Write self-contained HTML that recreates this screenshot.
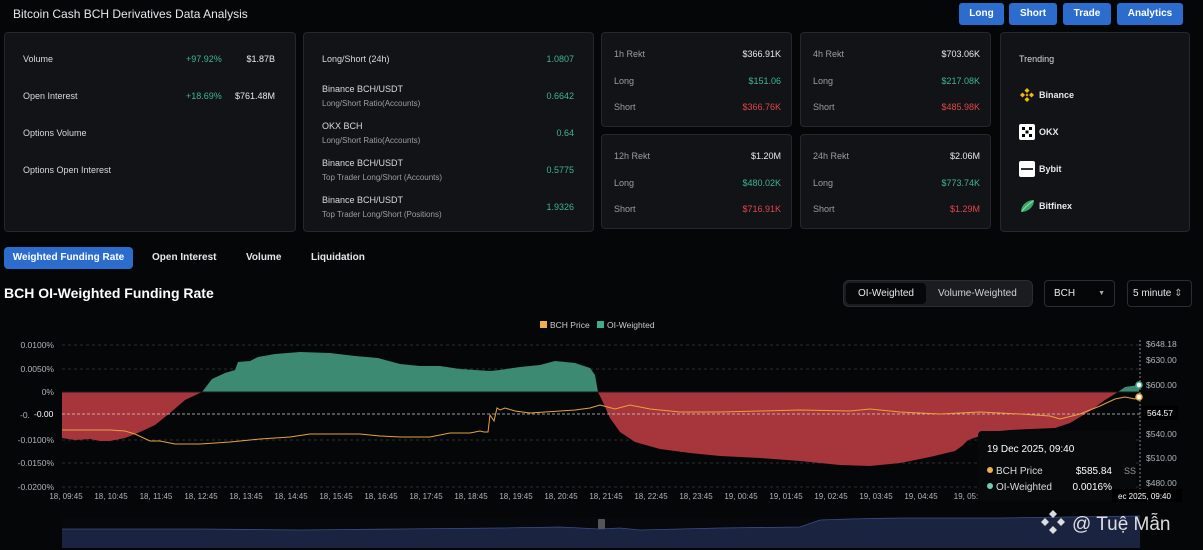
<!DOCTYPE html>
<html><head><meta charset="utf-8"><style>
*{margin:0;padding:0;box-sizing:border-box}
body{width:1203px;height:550px;background:#050608;color:#e6e8eb;font-family:"Liberation Sans",sans-serif;font-size:9px;position:relative;overflow:hidden}
.abs{position:absolute}
.card{position:absolute;background:#111317;border:1px solid #24272d;border-radius:4px}
.g{color:#3fb68b}.r{color:#e0474c}
.btn{position:absolute;top:3px;height:22px;background:#2c6ccd;border-radius:3px;color:#fff;font-weight:bold;font-size:10px;line-height:22px;text-align:center}
.lbl{color:#d8dadd}
.sub{color:#9a9ea5;font-size:8px}
.tab{position:absolute;top:247px;height:22px;line-height:22px;font-weight:bold;font-size:10px;color:#e6e8eb}
</style></head><body>
<div class="abs" style="left:13px;top:7px;font-size:12px;color:#e6e8eb">Bitcoin Cash BCH Derivatives Data Analysis</div>
<div class="btn" style="left:959px;width:45px">Long</div>
<div class="btn" style="left:1009px;width:48px">Short</div>
<div class="btn" style="left:1063px;width:48px">Trade</div>
<div class="btn" style="left:1117px;width:66px">Analytics</div>

<div class="card" style="left:4px;top:32px;width:292px;height:200px">
 <div class="abs lbl" style="left:18px;top:21px">Volume</div><div class="abs g" style="left:181px;top:21px">+97.92%</div><div class="abs" style="right:20px;top:21px">$1.87B</div>
 <div class="abs lbl" style="left:18px;top:58px">Open Interest</div><div class="abs g" style="left:181px;top:58px">+18.69%</div><div class="abs" style="right:20px;top:58px">$761.48M</div>
 <div class="abs lbl" style="left:18px;top:95px">Options Volume</div>
 <div class="abs lbl" style="left:18px;top:132px">Options Open Interest</div>
</div>
<div class="card" style="left:303px;top:32px;width:291px;height:200px">
 <div class="abs lbl" style="left:18px;top:21px">Long/Short (24h)</div><div class="abs g" style="right:19px;top:21px">1.0807</div>
 <div class="abs lbl" style="left:18px;top:51px">Binance BCH/USDT</div><div class="abs sub" style="left:18px;top:66px">Long/Short Ratio(Accounts)</div><div class="abs g" style="right:19px;top:58px">0.6642</div>
 <div class="abs lbl" style="left:18px;top:88px">OKX BCH</div><div class="abs sub" style="left:18px;top:103px">Long/Short Ratio(Accounts)</div><div class="abs g" style="right:19px;top:95px">0.64</div>
 <div class="abs lbl" style="left:18px;top:125px">Binance BCH/USDT</div><div class="abs sub" style="left:18px;top:140px">Top Trader Long/Short (Accounts)</div><div class="abs g" style="right:19px;top:132px">0.5775</div>
 <div class="abs lbl" style="left:18px;top:162px">Binance BCH/USDT</div><div class="abs sub" style="left:18px;top:177px">Top Trader Long/Short (Positions)</div><div class="abs g" style="right:19px;top:169px">1.9326</div>
</div>

<div class="card" style="left:601px;top:32px;width:191px;height:95px">
 <div class="abs sub" style="left:12px;top:16px;font-size:9px">1h Rekt</div><div class="abs" style="right:10px;top:16px">$366.91K</div>
 <div class="abs sub" style="left:12px;top:43px;font-size:9px">Long</div><div class="abs g" style="right:10px;top:43px">$151.06</div>
 <div class="abs sub" style="left:12px;top:69px;font-size:9px">Short</div><div class="abs r" style="right:10px;top:69px">$366.76K</div>
</div>
<div class="card" style="left:800px;top:32px;width:191px;height:95px">
 <div class="abs sub" style="left:12px;top:16px;font-size:9px">4h Rekt</div><div class="abs" style="right:10px;top:16px">$703.06K</div>
 <div class="abs sub" style="left:12px;top:43px;font-size:9px">Long</div><div class="abs g" style="right:10px;top:43px">$217.08K</div>
 <div class="abs sub" style="left:12px;top:69px;font-size:9px">Short</div><div class="abs r" style="right:10px;top:69px">$485.98K</div>
</div>
<div class="card" style="left:601px;top:134px;width:191px;height:95px">
 <div class="abs sub" style="left:12px;top:16px;font-size:9px">12h Rekt</div><div class="abs" style="right:10px;top:16px">$1.20M</div>
 <div class="abs sub" style="left:12px;top:43px;font-size:9px">Long</div><div class="abs g" style="right:10px;top:43px">$480.02K</div>
 <div class="abs sub" style="left:12px;top:69px;font-size:9px">Short</div><div class="abs r" style="right:10px;top:69px">$716.91K</div>
</div>
<div class="card" style="left:800px;top:134px;width:191px;height:95px">
 <div class="abs sub" style="left:12px;top:16px;font-size:9px">24h Rekt</div><div class="abs" style="right:10px;top:16px">$2.06M</div>
 <div class="abs sub" style="left:12px;top:43px;font-size:9px">Long</div><div class="abs g" style="right:10px;top:43px">$773.74K</div>
 <div class="abs sub" style="left:12px;top:69px;font-size:9px">Short</div><div class="abs r" style="right:10px;top:69px">$1.29M</div>
</div>
<div class="card" style="left:1000px;top:32px;width:190px;height:200px">
 <div class="abs lbl" style="left:18px;top:21px">Trending</div>
 <svg class="abs" style="left:18px;top:54px" width="16" height="16" viewBox="0 0 16 16"><g fill="#f0b90b"><path d="M8 1l2.5 2.5L8 6 5.5 3.5z"/><path d="M8 10l2.5 2.5L8 15l-2.5-2.5z"/><path d="M3.5 5.5L6 8l-2.5 2.5L1 8z"/><path d="M12.5 5.5L15 8l-2.5 2.5L10 8z"/><path d="M8 6.5L9.5 8 8 9.5 6.5 8z"/></g></svg>
 <div class="abs" style="left:38px;top:57px;font-weight:bold">Binance</div>
 <svg class="abs" style="left:18px;top:91px" width="16" height="16"><rect width="16" height="16" rx="2" fill="#fff"/><g fill="#000"><rect x="3" y="3" width="3" height="3"/><rect x="10" y="3" width="3" height="3"/><rect x="6.5" y="6.5" width="3" height="3"/><rect x="3" y="10" width="3" height="3"/><rect x="10" y="10" width="3" height="3"/></g></svg>
 <div class="abs" style="left:38px;top:94px;font-weight:bold">OKX</div>
 <svg class="abs" style="left:18px;top:128px" width="16" height="16"><rect width="16" height="16" rx="2" fill="#fff"/><rect x="2" y="7" width="12" height="2" fill="#333"/></svg>
 <div class="abs" style="left:38px;top:131px;font-weight:bold">Bybit</div>
 <svg class="abs" style="left:18px;top:165px" width="16" height="16"><path d="M2 14C2 7 8 2 15 2 15 9 9 14 2 14z" fill="#3aa866"/><path d="M3 13C6 9 10 6 14 3" stroke="#9ee0b0" stroke-width="1" fill="none"/></svg>
 <div class="abs" style="left:38px;top:168px;font-weight:bold">Bitfinex</div>
</div>

<div class="tab" style="left:4px;width:129px;background:#2c6ccd;border-radius:4px;text-align:center;color:#fff">Weighted Funding Rate</div>
<div class="tab" style="left:152px">Open Interest</div>
<div class="tab" style="left:246px">Volume</div>
<div class="tab" style="left:311px">Liquidation</div>

<div class="abs" style="left:4px;top:285px;font-size:14px;font-weight:bold;color:#fff">BCH OI-Weighted Funding Rate</div>
<div class="abs" style="left:843px;top:280px;width:190px;height:27px;background:#1a1c20;border:1px solid #2a2d33;border-radius:6px"></div>
<div class="abs" style="left:846px;top:283px;width:80px;height:21px;background:#060708;border-radius:4px;text-align:center;line-height:21px;font-size:10px">OI-Weighted</div>
<div class="abs" style="left:938px;top:283px;line-height:21px;font-size:10px;color:#d0d2d6">Volume-Weighted</div>
<div class="abs" style="left:1044px;top:280px;width:71px;height:27px;border:1px solid #2a2d33;border-radius:4px;line-height:25px;padding-left:9px;font-size:10px">BCH<span style="position:absolute;right:9px;font-size:7px;color:#aaa">▼</span></div>
<div class="abs" style="left:1127px;top:280px;width:65px;height:27px;border:1px solid #2a2d33;border-radius:4px;line-height:25px;padding-left:5px;font-size:10px">5 minute <span style="color:#aaa">⇕</span></div>

<svg class="abs" style="left:0;top:315px" width="1203" height="235" viewBox="0 315 1203 235" font-family="Liberation Sans, sans-serif" font-size="8.5">
 <rect x="540" y="321" width="7" height="7" fill="#f0b04a"/><text x="550" y="328" fill="#ccc">BCH Price</text>
 <rect x="597" y="321" width="7" height="7" fill="#3fae88"/><text x="607" y="328" fill="#ccc">OI-Weighted</text>
 <g stroke="#2c2f35" stroke-dasharray="3,3">
  <line x1="62" y1="345" x2="1140" y2="345"/><line x1="62" y1="369" x2="1140" y2="369"/>
  <line x1="62" y1="440" x2="1140" y2="440"/><line x1="62" y1="463" x2="1140" y2="463"/><line x1="62" y1="487" x2="1140" y2="487"/>
 </g>
 <path d="M62 392 L62 438 L75 440 L90 439 L100 441 L110 441 L125 438 L140 432 L155 425 L170 413 L185 400 L202 392 Z" fill="#a7363c"/>
 <path d="M202 392 L212 379 L225 373 L235 370 L238 362 L250 361 L258 357 L275 354 L300 352 L330 353 L355 356 L378 358 L400 364 L420 366 L440 366 L460 369 L490 371 L500 370 L520 367 L540 365 L555 361 L575 363 L590 368 L595 375 L598 392 Z" fill="#3d8a73"/>
 <path d="M598 392 L602 400 L610 418 L620 432 L635 442 L660 449 L690 453 L720 456 L760 458 L800 461 L840 465 L870 466 L900 463 L930 457 L955 451 L962 446 L968 440 L980 436 L990 432 L1010 430 L1030 429 L1055 428 L1070 423 L1090 411 L1105 400 L1118 392 Z" fill="#a7363c"/>
 <path d="M1118 392 L1125 387 L1139 385 L1139 392 Z" fill="#3d8a73"/>
 <line x1="62" y1="392" x2="1140" y2="392" stroke="#1a1a1a"/>
 <line x1="62" y1="414" x2="1140" y2="414" stroke="#cfd2d6" stroke-dasharray="3,2" stroke-width="0.8"/>
 <path d="M62 430 L90 430 L110 430 L125 431 L135 434 L150 441 L160 441 L175 444 L200 444 L230 442 L260 439 L290 437 L310 434 L330 434 L360 434 L380 436 L400 437 L430 437 L450 433 L470 433 L480 431 L484 432 L488 432 L490 415 L494 421 L497 408 L500 410 L505 408 L515 411 L530 413 L545 412 L560 411 L575 410 L590 408 L600 405 L615 409 L630 405 L650 409 L680 412 L720 412 L760 411 L800 410 L850 411 L870 409 L900 412 L940 414 L980 412 L1020 414 L1050 416 L1060 419 L1080 414 L1100 406 L1115 399 L1125 397 L1135 399 L1139 397" fill="none" stroke="#e8a33c" stroke-width="1"/>
 <line x1="1140" y1="340" x2="1140" y2="495" stroke="#888" stroke-dasharray="2,2"/>
 <circle cx="1139" cy="385" r="3" fill="#fff" stroke="#3fae88" stroke-width="1.5"/>
 <circle cx="1139" cy="397" r="3" fill="#fff" stroke="#e8a33c" stroke-width="1.5"/>
 <g fill="#b0b4ba" text-anchor="end">
  <text x="54" y="348">0.0100%</text><text x="54" y="372">0.0050%</text><text x="54" y="395">0%</text>
  <text x="54" y="443">-0.0100%</text><text x="54" y="466">-0.0150%</text><text x="54" y="490">-0.0200%</text>
 </g>
 <rect x="32" y="407" width="26" height="13" fill="#050608"/><text x="34" y="417" fill="#fff">-0.00</text><text x="20" y="418" fill="#b0b4ba">-0.</text>
 <g fill="#b0b4ba">
  <text x="1146" y="347">$648.18</text><text x="1146" y="363">$630.00</text><text x="1146" y="388">$600.00</text>
  <text x="1146" y="437">$540.00</text><text x="1146" y="461">$510.00</text><text x="1146" y="486">$480.00</text>
 </g>
 <rect x="1142" y="406" width="36" height="14" fill="#000"/><text x="1147" y="416" fill="#fff">564.57</text>
 <g fill="#b0b4ba" text-anchor="middle" font-size="8">
  <text x="66" y="499">18, 09:45</text><text x="111" y="499">18, 10:45</text><text x="156" y="499">18, 11:45</text><text x="201" y="499">18, 12:45</text><text x="246" y="499">18, 13:45</text><text x="291" y="499">18, 14:45</text><text x="336" y="499">18, 15:45</text><text x="381" y="499">18, 16:45</text><text x="426" y="499">18, 17:45</text><text x="471" y="499">18, 18:45</text><text x="516" y="499">18, 19:45</text><text x="561" y="499">18, 20:45</text><text x="606" y="499">18, 21:45</text><text x="651" y="499">18, 22:45</text><text x="696" y="499">18, 23:45</text><text x="741" y="499">19, 00:45</text><text x="786" y="499">19, 01:45</text><text x="831" y="499">19, 02:45</text><text x="876" y="499">19, 03:45</text><text x="921" y="499">19, 04:45</text><text x="966" y="499">19, 05:</text>
 </g>
 <rect x="978" y="431" width="158" height="70" rx="4" fill="#08090b"/>
 <text x="987" y="452" fill="#fff" font-size="10">19 Dec 2025, 09:40</text>
 <circle cx="990" cy="470" r="3" fill="#f0b04a"/><text x="996" y="474" fill="#ddd" font-size="10">BCH Price</text><text x="1112" y="474" fill="#fff" font-size="10" text-anchor="end">$585.84</text>
 <circle cx="990" cy="486" r="3" fill="#6fd0b0"/><text x="996" y="490" fill="#ddd" font-size="10">OI-Weighted</text><text x="1112" y="490" fill="#fff" font-size="10" text-anchor="end">0.0016%</text>
 <text x="1124" y="474" fill="#999" font-size="9">SS</text>
 <rect x="1112" y="489" width="70" height="13" fill="#000"/><text x="1118" y="499" fill="#fff" font-size="8">ec 2025, 09:40</text>
 <rect x="62" y="517" width="1080" height="31" fill="#07080c"/>
 <path d="M62 529 L200 529 L300 530 L400 529 L500 528 L560 527 L600 529 L620 528 L640 530 L720 528 L800 527 L820 520 L850 519 L900 518 L1000 518 L1140 516 L1140 548 L62 548 Z" fill="#1a2340"/>
 <path d="M62 529 L200 529 L300 530 L400 529 L500 528 L560 527 L600 529 L620 528 L640 530 L720 528 L800 527 L820 520 L850 519 L900 518 L1000 518 L1140 516" fill="none" stroke="#3a4f86" stroke-width="0.8"/>
 <rect x="598" y="519" width="7" height="10" rx="1" fill="#555"/>
 <g fill="#fff" opacity="0.85"><path d="M1053 510l4 4-4 4-4-4z"/><path d="M1053 526l4 4-4 4-4-4z"/><path d="M1045 518l4 4-4 4-4-4z"/><path d="M1061 518l4 4-4 4-4-4z"/></g>
 <text x="1072" y="530" fill="#fff" opacity="0.85" font-size="19">@ Tuệ Mẫn</text>
</svg>
</body></html>
